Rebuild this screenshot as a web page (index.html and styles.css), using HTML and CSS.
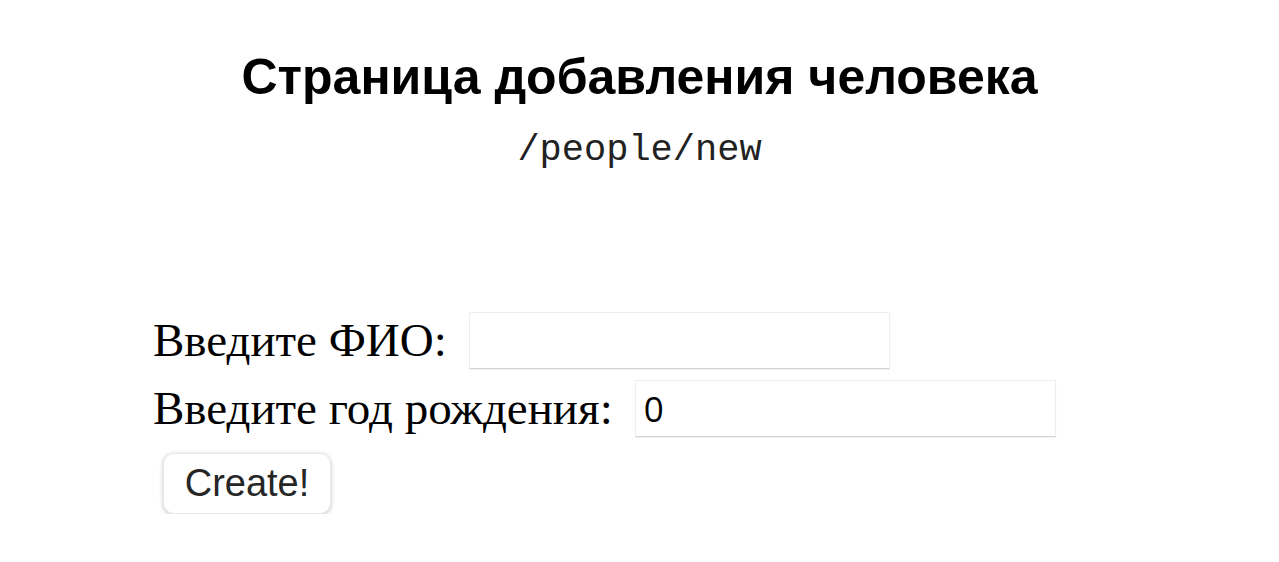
FILE: index.html
```html
<!DOCTYPE html>
<html lang="ru">
<head>
<meta charset="utf-8"/>
<title>Страница добавления человека</title>
<link rel="stylesheet" href="styles.css">
</head>
<body>
<header class="page-head">
<h1>Страница добавления человека</h1>
<code class="route">/people/new</code>
</header>
<form class="person-form" action="/people" method="post">
<div class="row">
<label for="fio">Введите ФИО:</label>
<input id="fio" name="fio" type="text"/>
</div>
<div class="row">
<label for="year">Введите год рождения:</label>
<input id="year" name="year" type="number" value="0"/>
</div>
<button type="submit">Create!</button>
</form>
</body>
</html>
```

FILE: styles.css
```css
body {
    margin: 0;
    background: #fff;
    color: #000;
    font-family: 'Liberation Serif', serif;
}
.page-head {
    text-align: center;
    padding-top: 48px;
}
h1 {
    margin: 0;
    font-family: 'Liberation Sans', Arial, sans-serif;
    font-weight: bold;
    font-size: 50px;
    line-height: 58px;
}
.route {
    display: block;
    margin-top: 24px;
    font-family: 'Liberation Mono', monospace;
    font-size: 37px;
    line-height: 40px;
    color: #222;
}
.person-form {
    margin-top: 142px;
    padding-left: 153px;
}
.row {
    display: flex;
    align-items: center;
    gap: 22px;
    margin-bottom: 11px;
}
label {
    font-size: 47px;
    line-height: 57px;
}
input {
    width: 421px;
    height: 57px;
    box-sizing: border-box;
    border: 1px solid #eeeeee;
    border-bottom-color: #d4d4d4;
    box-shadow: 0 1px 1px rgba(0,0,0,0.05);
    padding: 0 8px;
    font-family: 'Open Sans', sans-serif;
    font-size: 35px;
    color: #000;
    outline: none;
}
input[type=number]::-webkit-inner-spin-button {
    -webkit-appearance: none;
}
button {
    margin-top: 5px;
    margin-left: 10px;
    width: 168px;
    height: 61px;
    background: #fff;
    border: 1px solid #eaeaea;
    border-radius: 11px;
    box-shadow: 0 1px 4px rgba(0,0,0,0.22);
    font-family: 'Liberation Sans', Arial, sans-serif;
    font-size: 38px;
    color: #262626;
    cursor: pointer;
}
```
